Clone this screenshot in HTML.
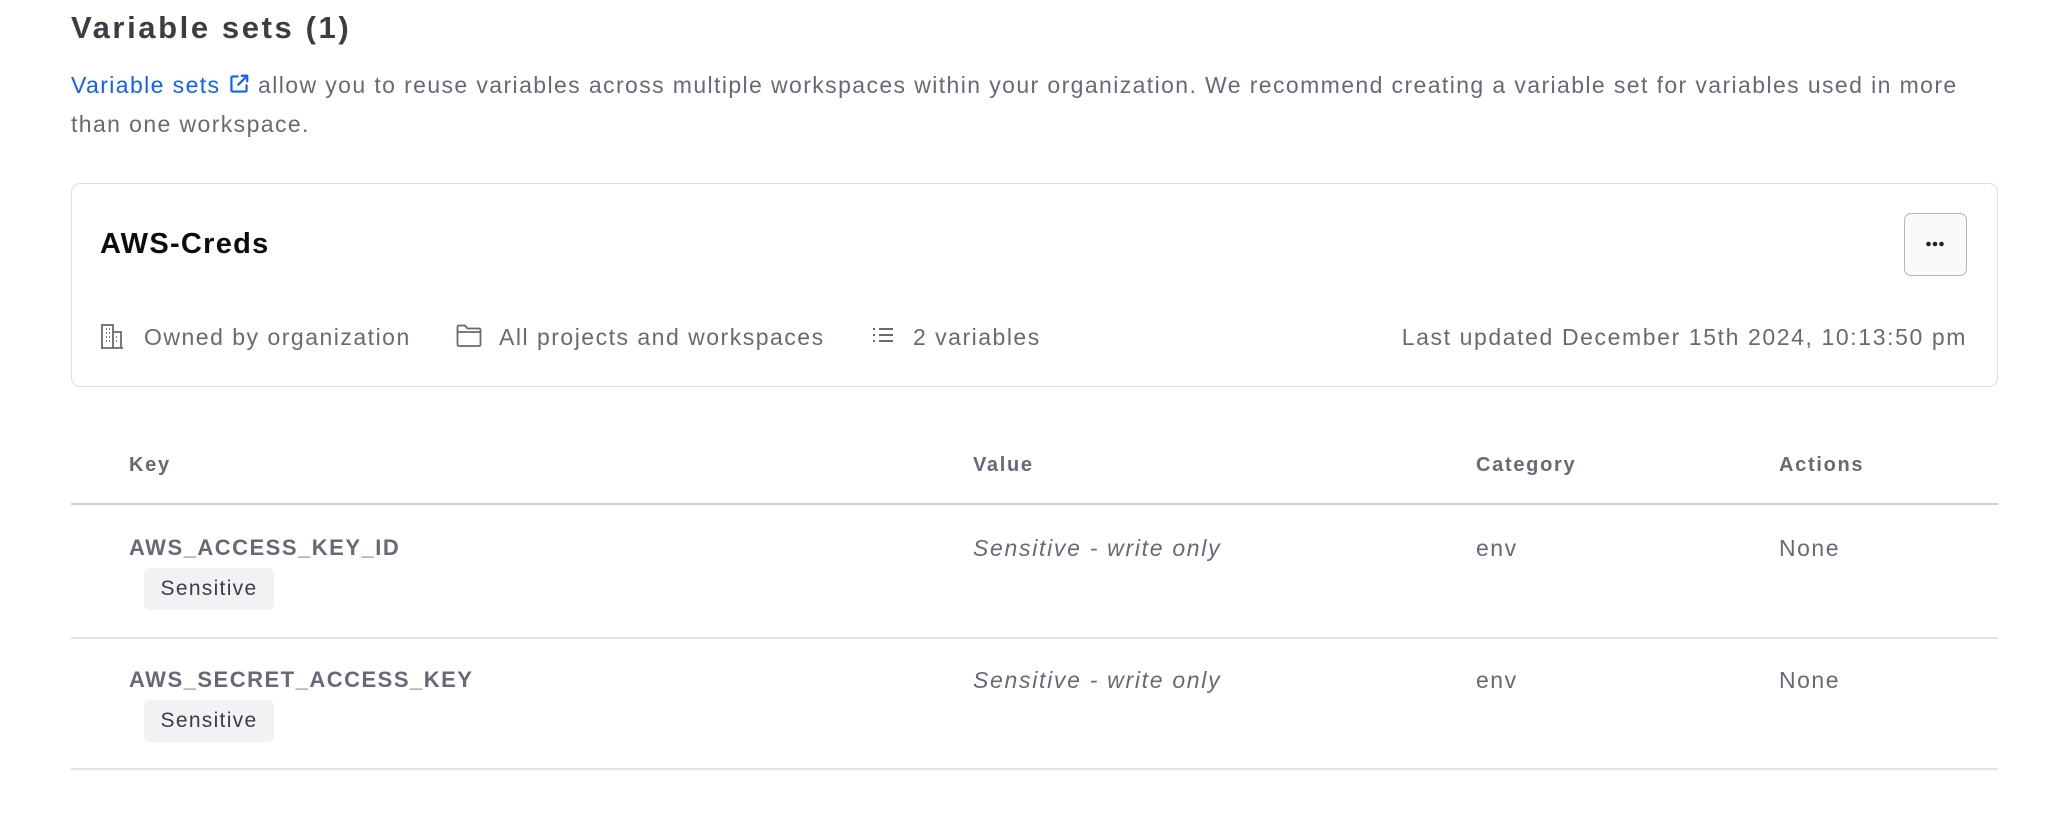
<!DOCTYPE html>
<html><head><meta charset="utf-8"><style>
*{box-sizing:border-box;margin:0;padding:0}
body{width:2048px;height:833px;background:#fff;font-family:"Liberation Sans",sans-serif;color:#656a76;position:relative;overflow:hidden}
.a{position:absolute;white-space:nowrap}
h1{position:absolute;left:71px;top:10px;font-size:31px;letter-spacing:2.6px;font-weight:700;color:#3b3d45}
.desc{position:absolute;left:71px;top:66px;width:1910px;font-size:23px;letter-spacing:1.4px;line-height:39px;color:#656a76}
.desc a{color:#1060ff;text-decoration:none}
.card{position:absolute;left:71px;top:183px;width:1927px;height:204px;border:1.5px solid #dcdde0;border-radius:9px}
.btn{position:absolute;left:1904px;top:213px;width:63px;height:63px;border:1.5px solid #b2b6bd;border-radius:7px;background:#fafafa}
.meta{font-size:23px;letter-spacing:1.5px;top:324px;color:#656a76}
.th{top:454px;font-size:20px;letter-spacing:1.7px;font-weight:700;color:#656a76}
.key{font-size:22px;letter-spacing:1.5px;font-weight:600;color:#656a76}
.badge{position:absolute;left:144px;width:130px;height:42px;background:#f1f2f3;border-radius:6px;font-size:21px;letter-spacing:1.3px;color:#3b3d45;text-align:center;line-height:42px}
.it{font-size:23px;letter-spacing:1.7px;font-style:italic;color:#656a76}
.ln{position:absolute;left:71px;width:1927px;background:#e3e4e6;height:1.5px}
</style></head><body>
<h1>Variable sets (1)</h1>
<div class="desc"><a>Variable sets <svg width="22" height="22" viewBox="0 0 16 16" style="vertical-align:-2px" fill="none" stroke="#1060ff" stroke-width="1.6" stroke-linecap="round" stroke-linejoin="round"><path d="M7 2.5H3.5a1 1 0 0 0-1 1v9a1 1 0 0 0 1 1h9a1 1 0 0 0 1-1V9"/><path d="M10 2h4v4M14 2L7.5 8.5"/></svg></a> allow you to reuse variables across multiple workspaces within your organization. We recommend creating a variable set for variables used in more than one workspace.</div>
<div class="card"></div>
<div class="a" style="left:100px;top:228px;font-size:29px;letter-spacing:1.3px;font-weight:600;color:#0c0c0e">AWS-Creds</div>
<div class="btn"><svg width="60" height="60" viewBox="0 0 60 60" style="position:absolute;left:0;top:0"><circle cx="23.5" cy="30" r="2.3" fill="#222"/><circle cx="30" cy="30" r="2.3" fill="#222"/><circle cx="36.5" cy="30" r="2.3" fill="#222"/></svg></div>
<svg class="a" style="left:100px;top:323px" width="24" height="26" viewBox="0 0 24 26" fill="none" stroke="#656a76" stroke-width="1.8"><path d="M2 25V2h11v23M13 9h8v16M1 25h22"/><path d="M6 6h1M9 6h1M6 10h1M9 10h1M6 14h1M9 14h1M6 18h1M9 18h1M16 14h1M16 18h1"/></svg>
<div class="a meta" style="left:144px">Owned by organization</div>
<svg class="a" style="left:456px;top:324px" width="26" height="24" viewBox="0 0 26 24" fill="none" stroke="#656a76" stroke-width="1.8" stroke-linejoin="round"><path d="M1.5 3a1.5 1.5 0 0 1 1.5-1.5h6l2.5 3h11.5a1.5 1.5 0 0 1 1.5 1.5v14.5a1.5 1.5 0 0 1-1.5 1.5H3a1.5 1.5 0 0 1-1.5-1.5z M1.5 8h23"/></svg>
<div class="a meta" style="left:499px">All projects and workspaces</div>
<svg class="a" style="left:872px;top:326px" width="22" height="20" viewBox="0 0 22 20" stroke="#656a76" stroke-width="2"><path d="M1 3h2M7 3h14M1 9h2M7 9h14M1 15h2M7 15h14"/></svg>
<div class="a meta" style="left:913px">2 variables</div>
<div class="a meta" style="right:81px;letter-spacing:1.6px">Last updated December 15th 2024, 10:13:50 pm</div>
<div class="a th" style="left:129px">Key</div>
<div class="a th" style="left:973px">Value</div>
<div class="a th" style="left:1476px">Category</div>
<div class="a th" style="left:1779px">Actions</div>
<div class="ln" style="top:503px;height:2px;background:#cdcfd3"></div>
<div class="a key" style="left:129px;top:535px">AWS_ACCESS_KEY_ID</div>
<div class="badge" style="top:568px">Sensitive</div>
<div class="a it" style="left:973px;top:535px">Sensitive - write only</div>
<div class="a meta" style="left:1476px;top:535px">env</div>
<div class="a meta" style="left:1779px;top:535px">None</div>
<div class="ln" style="top:637px"></div>
<div class="a key" style="left:129px;top:667px">AWS_SECRET_ACCESS_KEY</div>
<div class="badge" style="top:700px">Sensitive</div>
<div class="a it" style="left:973px;top:667px">Sensitive - write only</div>
<div class="a meta" style="left:1476px;top:667px">env</div>
<div class="a meta" style="left:1779px;top:667px">None</div>
<div class="ln" style="top:768px"></div>
</body></html>
